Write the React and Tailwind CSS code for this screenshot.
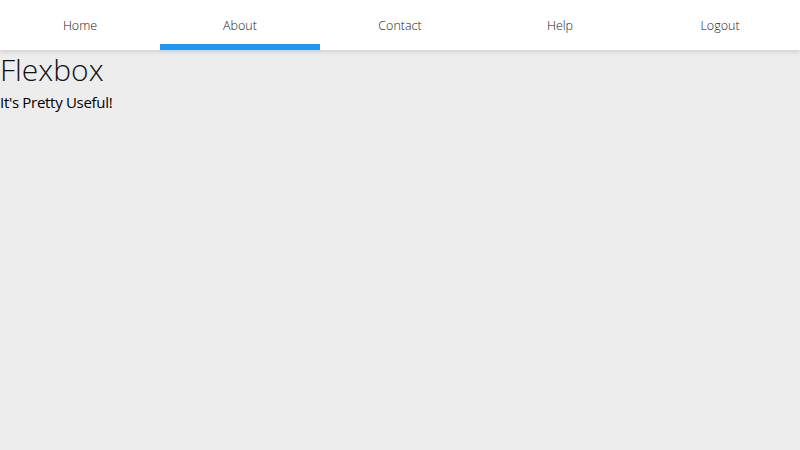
export default function App() {
  const links = ["Home", "About", "Contact", "Help", "Logout"];
  const active = "About";

  return (
    <div className="min-h-[450px] bg-[#ededed] font-['Open_Sans',sans-serif] text-black">
      <nav className="flex h-[50px] bg-white shadow-[0_2px_4px_rgba(0,0,0,0.12)]">
        {links.map((l) => (
          <a
            key={l}
            href="#"
            className={
              "flex flex-1 items-center justify-center pt-[2px] text-[12.5px] font-light text-[#222] " +
              (l === active ? "shadow-[inset_0_-6px_0_#2196f3]" : "")
            }
          >
            {l}
          </a>
        ))}
      </nav>
      <h1 className="text-[30px] font-light leading-[40px] text-[#111]">Flexbox</h1>
      <p className="text-[15px] leading-[25px] tracking-[-0.3px]">It's Pretty Useful!</p>
    </div>
  );
}
